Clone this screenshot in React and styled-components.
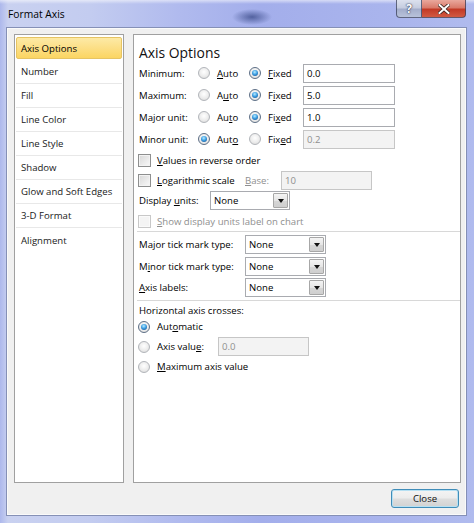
import React from 'react';
import styled, { createGlobalStyle, css } from 'styled-components';

const Global = createGlobalStyle`
  html, body { margin: 0; padding: 0; background: #fff; }
  body {
    font-family: "Open Sans", "Noto Sans", sans-serif;
    font-size: 9.6px;
    color: #000;
  }
  #root { width: 474px; height: 523px; }
`;

const Window = styled.div`
  width: 474px;
  height: 523px;
  box-sizing: border-box;
  display: flex;
  flex-direction: column;
  padding: 0 8px 8px 7px;
  background:
    radial-gradient(ellipse 20px 8px at 252px 17px, rgba(62, 78, 140, 0.8), rgba(62, 78, 140, 0) 100%),
    linear-gradient(180deg, rgba(255, 255, 255, 0.55) 0px, rgba(255, 255, 255, 0) 4px),
    linear-gradient(90deg, #adb8ec 0px, #c9d1f0 8px, #c3ccf0 90px, #b0baee 180px, #a3aeeb 260px, #aab5ed 400px, #b0bbee 474px);
`;

const TitleBar = styled.div`
  height: 28px;
  flex: none;
  display: flex;
  align-items: flex-start;
`;

const Title = styled.div`
  flex: 1;
  padding-left: 1px;
  line-height: 28px;
  font-size: 10.3px;
  color: #000;
`;

const CaptionButton = styled.div`
  height: 18px;
  width: ${(p) => p.$w}px;
  box-sizing: border-box;
  display: flex;
  align-items: center;
  justify-content: center;
  border: 1px solid rgba(55, 62, 90, 0.75);
  border-top: none;
  color: #fff;
  font-weight: 700;
  font-size: 12px;
  text-shadow: 0 0 2px #2a3350, 0 0 1px #2a3350;
  ${(p) =>
    p.$variant === 'close'
      ? css`
          border-left: none;
          border-bottom-right-radius: 4px;
          background: linear-gradient(180deg, #e9a89d 0%, #d97b6b 45%, #c23a26 55%, #d25a42 100%);
        `
      : css`
          border-bottom-left-radius: 4px;
          background: linear-gradient(180deg, #dce1ee 0%, #c6cde0 45%, #a4aecb 55%, #b8c2da 100%);
        `}
`;

const Content = styled.div`
  flex: 1;
  box-sizing: border-box;
  background: #f0f0f0;
  border: 1px solid #fafafa;
  box-shadow: 0 0 0 1px #8590b6;
  padding: 5px 4px 6px 6px;
  display: flex;
  flex-direction: column;
`;

const Panels = styled.div`
  height: 449px;
  display: flex;
  gap: 9px;
`;

const List = styled.div`
  width: 110px;
  box-sizing: border-box;
  border: 1px solid #a0a0a0;
  background: #fff;
  padding: 1px;
`;

const ListItem = styled.div`
  height: 24px;
  box-sizing: border-box;
  display: flex;
  align-items: center;
  padding-left: 5px;
  white-space: nowrap;
  color: #1a1a1a;
  border-bottom: 1px solid #e8e8e8;
  &:last-child { border-bottom: none; }
  ${(p) =>
    p.$selected &&
    css`
      height: 22px;
      margin: 1px 0;
      padding-left: 4px;
      border: 1px solid #e6c463;
      border-radius: 2px;
      background: linear-gradient(180deg, #fdeaa6 0%, #fcdf86 50%, #fbd562 100%);
      color: #000;
      &:last-child { border-bottom: 1px solid #e6c463; }
    `}
`;

const Panel = styled.div`
  width: 328px;
  box-sizing: border-box;
  border: 1px solid #a0a0a0;
  background: #fff;
  padding: 0 5px;
  display: flex;
  flex-direction: column;
`;

const Header = styled.div`
  height: 27px;
  box-sizing: border-box;
  padding-top: 8px;
  line-height: 20px;
  font-size: 13.9px;
  color: #111;
`;

const Row = styled.div`
  height: ${(p) => p.$h || 22}px;
  display: flex;
  align-items: center;
  flex: none;
`;

const Label = styled.span`
  width: ${(p) => (p.$w ? `${p.$w}px` : 'auto')};
  flex: none;
  white-space: nowrap;
  color: ${(p) => (p.$disabled ? '#8f8f8f' : '#000')};
`;

const Option = styled.label`
  display: flex;
  align-items: center;
  gap: ${(p) => p.$gap ?? 7}px;
  width: ${(p) => (p.$w ? `${p.$w}px` : 'auto')};
  flex: none;
  white-space: nowrap;
  margin-left: ${(p) => p.$ml || 0}px;
  color: ${(p) => (p.$disabled ? '#8f8f8f' : '#000')};
`;

const Key = styled.span`
  text-decoration: underline;
  text-underline-offset: 1px;
`;

const Radio = styled.span`
  width: 12px;
  height: 12px;
  border-radius: 50%;
  box-sizing: border-box;
  flex: none;
  position: relative;
  border: 1px solid ${(p) => (p.$checked ? '#5d6f86' : '#b2b5ba')};
  background: radial-gradient(circle at 50% 40%, #ffffff 0%, #ececec 55%, #d3d3d3 100%);
  ${(p) =>
    p.$checked &&
    css`
      &::after {
        content: '';
        position: absolute;
        left: 2px;
        top: 2px;
        width: 6px;
        height: 6px;
        border-radius: 50%;
        background: radial-gradient(circle at 45% 35%, #b9ecff 0%, #3ea0e4 45%, #0d3f7c 100%);
      }
    `}
`;

const Check = styled.span`
  width: 13px;
  height: 13px;
  box-sizing: border-box;
  flex: none;
  border: 1px solid ${(p) => (p.$disabled ? '#c8c8c8' : '#8e8f8f')};
  background: ${(p) =>
    p.$disabled
      ? '#f4f4f4'
      : 'linear-gradient(135deg, #d7d7d7 0%, #ececec 60%, #f8f8f8 100%)'};
  box-shadow: inset 0 0 0 1px ${(p) => (p.$disabled ? '#fafafa' : '#f3f3f3')};
`;

const TextBox = styled.div`
  width: ${(p) => p.$w}px;
  height: 19px;
  box-sizing: border-box;
  flex: none;
  border: 1px solid ${(p) => (p.$disabled ? '#c6c6c6' : '#a9abb0')};
  background: ${(p) => (p.$disabled ? '#f3f3f3' : '#fff')};
  color: ${(p) => (p.$disabled ? '#8f8f8f' : '#000')};
  padding-left: 3px;
  display: flex;
  align-items: center;
`;

const Select = styled.div`
  width: ${(p) => p.$w}px;
  height: 19px;
  box-sizing: border-box;
  flex: none;
  border: 1px solid #a9abb0;
  background: #fff;
  padding: 1px 1px 1px 3px;
  display: flex;
  align-items: center;
  justify-content: space-between;
`;

const DropButton = styled.span`
  width: 15px;
  height: 15px;
  box-sizing: border-box;
  border: 1px solid #a7a7a7;
  border-radius: 1px;
  background: linear-gradient(180deg, #f4f4f4 0%, #e6e6e6 50%, #d6d6d6 51%, #cfcfcf 100%);
  display: flex;
  align-items: center;
  justify-content: center;
  &::after {
    content: '';
    border-left: 3.5px solid transparent;
    border-right: 3.5px solid transparent;
    border-top: 4px solid #111;
    margin-top: 1px;
  }
`;

const Separator = styled.div`
  height: 1px;
  flex: none;
  background: #d8d8d8;
  margin: ${(p) => p.$mt || 0}px -5px ${(p) => p.$mb || 0}px -2px;
`;

const Footer = styled.div`
  display: flex;
  justify-content: flex-end;
  margin-top: 6px;
  padding-right: 2px;
`;

const CloseButton = styled.div`
  width: 68px;
  height: 19px;
  box-sizing: border-box;
  border: 1px solid #3f8cb8;
  border-radius: 3px;
  box-shadow: inset 0 0 0 1px #b6e0f3;
  background: linear-gradient(180deg, #f4f4f4 0%, #ececec 48%, #dedede 52%, #d2d2d2 100%);
  display: flex;
  align-items: center;
  justify-content: center;
  color: #111;
`;

const XIcon = () => (
  <svg width="12" height="10" viewBox="0 0 12 10">
    <path d="M1.5 1 L10.5 9 M10.5 1 L1.5 9" stroke="#3a2420" strokeWidth="3.6" strokeLinecap="square" />
    <path d="M1.5 1 L10.5 9 M10.5 1 L1.5 9" stroke="#ffffff" strokeWidth="2" strokeLinecap="square" />
  </svg>
);

const listItems = [
  'Axis Options',
  'Number',
  'Fill',
  'Line Color',
  'Line Style',
  'Shadow',
  'Glow and Soft Edges',
  '3-D Format',
  'Alignment',
];

const unitRows = [
  { label: 'Minimum:', auto: ['', 'A', 'uto'], fixed: ['', 'F', 'ixed'], value: '0.0', mode: 'fixed' },
  { label: 'Maximum:', auto: ['A', 'u', 'to'], fixed: ['F', 'i', 'xed'], value: '5.0', mode: 'fixed' },
  { label: 'Major unit:', auto: ['Au', 't', 'o'], fixed: ['Fi', 'x', 'ed'], value: '1.0', mode: 'fixed' },
  { label: 'Minor unit:', auto: ['Aut', 'o', ''], fixed: ['Fix', 'e', 'd'], value: '0.2', mode: 'auto' },
];

const Accel = ({ parts }) => (
  <span>
    {parts[0]}
    <Key>{parts[1]}</Key>
    {parts[2]}
  </span>
);

export default function App() {
  return (
    <>
      <Global />
      <Window>
        <TitleBar>
          <Title>Format Axis</Title>
          <CaptionButton $w={26}>?</CaptionButton>
          <CaptionButton $w={44} $variant="close">
            <XIcon />
          </CaptionButton>
        </TitleBar>
        <Content>
          <Panels>
            <List>
              {listItems.map((item, i) => (
                <ListItem key={item} $selected={i === 0}>
                  {item}
                </ListItem>
              ))}
            </List>
            <Panel>
              <Header>Axis Options</Header>
              {unitRows.map((r) => (
                <Row key={r.label}>
                  <Label $w={59}>{r.label}</Label>
                  <Option $w={51}>
                    <Radio $checked={r.mode === 'auto'} />
                    <Accel parts={r.auto} />
                  </Option>
                  <Option $w={54}>
                    <Radio $checked={r.mode === 'fixed'} />
                    <Accel parts={r.fixed} />
                  </Option>
                  <TextBox $w={92} $disabled={r.mode === 'auto'}>
                    {r.value}
                  </TextBox>
                </Row>
              ))}
              <Row $h={20}>
                <Option $gap={6} $ml={-1}>
                  <Check />
                  <Accel parts={['', 'V', 'alues in reverse order']} />
                </Option>
              </Row>
              <Row $h={20}>
                <Option $gap={6} $ml={-1} $w={107}>
                  <Check />
                  <Accel parts={['', 'L', 'ogarithmic scale']} />
                </Option>
                <Label $w={36} $disabled>
                  <Accel parts={['', 'B', 'ase:']} />
                </Label>
                <TextBox $w={91} $disabled>
                  10
                </TextBox>
              </Row>
              <Row $h={21}>
                <Label $w={71}>
                  <Accel parts={['Display ', 'u', 'nits:']} />
                </Label>
                <Select $w={80}>
                  None
                  <DropButton />
                </Select>
              </Row>
              <Row $h={20}>
                <Option $gap={6} $ml={-1} $disabled>
                  <Check $disabled />
                  <Accel parts={['', 'S', 'how display units label on chart']} />
                </Option>
              </Row>
              <Separator $mb={1} />
              <Row>
                <Label $w={106}>
                  <Accel parts={['Ma', 'j', 'or tick mark type:']} />
                </Label>
                <Select $w={81}>
                  None
                  <DropButton />
                </Select>
              </Row>
              <Row>
                <Label $w={106}>
                  <Accel parts={['M', 'i', 'nor tick mark type:']} />
                </Label>
                <Select $w={81}>
                  None
                  <DropButton />
                </Select>
              </Row>
              <Row $h={21}>
                <Label $w={106}>
                  <Accel parts={['', 'A', 'xis labels:']} />
                </Label>
                <Select $w={81}>
                  None
                  <DropButton />
                </Select>
              </Row>
              <Separator $mt={2} />
              <Row $h={19}>
                <Label>Horizontal axis crosses:</Label>
              </Row>
              <Row $h={13}>
                <Option $ml={-1}>
                  <Radio $checked />
                  <Accel parts={['Aut', 'o', 'matic']} />
                </Option>
              </Row>
              <Row $h={27}>
                <Option $ml={-1} $w={80}>
                  <Radio />
                  <Accel parts={['Axis valu', 'e', ':']} />
                </Option>
                <TextBox $w={91} $disabled>
                  0.0
                </TextBox>
              </Row>
              <Row $h={13}>
                <Option $ml={-1}>
                  <Radio />
                  <Accel parts={['', 'M', 'aximum axis value']} />
                </Option>
              </Row>
            </Panel>
          </Panels>
          <Footer>
            <CloseButton>Close</CloseButton>
          </Footer>
        </Content>
      </Window>
    </>
  );
}
